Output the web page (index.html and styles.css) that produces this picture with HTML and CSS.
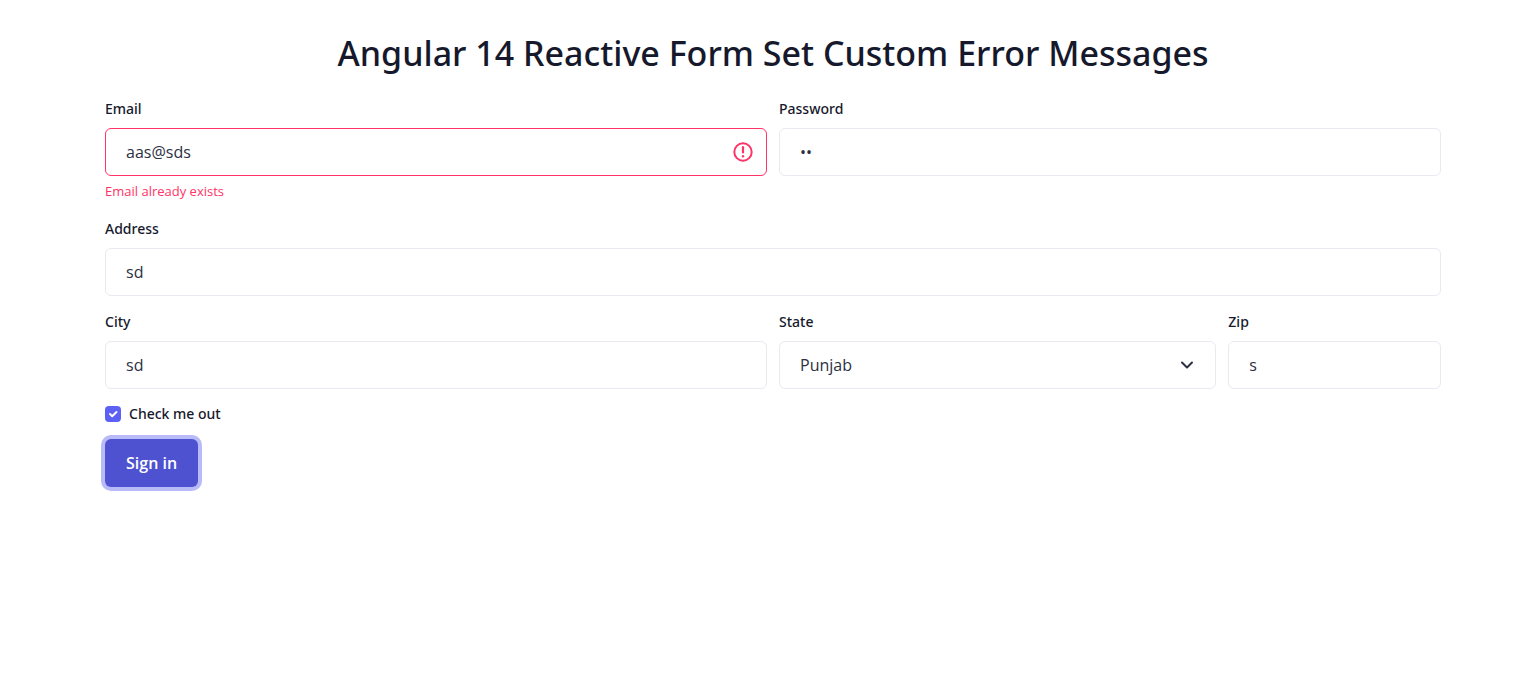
FILE: index.html
```
<!DOCTYPE html>
<html lang="en">
<head>
<meta charset="UTF-8">
<meta name="viewport" content="width=device-width, initial-scale=1">
<title>Angular 14 Reactive Form Set Custom Error Messages</title>
<link rel="stylesheet" href="styles.css">
</head>
<body>
<div class="container">
    <h1>Angular 14 Reactive Form Set Custom Error Messages</h1>
    <form class="row">
        <div class="col-6">
            <label for="email" class="form-label">Email</label>
            <div class="control">
                <input type="email" class="form-control is-invalid" id="email" value="aas@sds">
                <svg class="icon-error" viewBox="0 0 20 20" fill="none" stroke="#f36" stroke-width="2" stroke-linecap="round">
                    <circle cx="10" cy="10" r="8.7"/>
                    <path d="M10 5.2v5.2" stroke-width="2.2"/>
                    <circle cx="10" cy="14.2" r="1.2" fill="#f36" stroke="none"/>
                </svg>
            </div>
            <div class="invalid-feedback">Email already exists</div>
        </div>
        <div class="col-6">
            <label for="password" class="form-label">Password</label>
            <input type="password" class="form-control" id="password" value="sd">
        </div>
        <div class="col-12">
            <label for="address" class="form-label">Address</label>
            <input type="text" class="form-control" id="address" value="sd">
        </div>
        <div class="col-6">
            <label for="city" class="form-label">City</label>
            <input type="text" class="form-control" id="city" value="sd">
        </div>
        <div class="col-4">
            <label for="state" class="form-label">State</label>
            <div class="control">
                <select id="state" class="form-control">
                    <option selected>Punjab</option>
                </select>
                <svg class="icon-arrow" viewBox="0 0 16 16" fill="none" stroke="#2d3043" stroke-width="2" stroke-linecap="round" stroke-linejoin="round">
                    <path d="M3 5.5l5 5 5-5"/>
                </svg>
            </div>
        </div>
        <div class="col-2">
            <label for="zip" class="form-label">Zip</label>
            <input type="text" class="form-control" id="zip" value="s">
        </div>
        <div class="col-12 form-check">
            <span class="check-box">
                <input type="checkbox" class="form-check-input" id="check" checked>
                <svg class="icon-check" viewBox="0 0 16 16" fill="none" stroke="#fff" stroke-width="2" stroke-linecap="round" stroke-linejoin="round">
                    <path d="M5 8l2.2 2.2L11.5 6"/>
                </svg>
            </span>
            <label for="check" class="form-check-label">Check me out</label>
        </div>
        <div class="col-12">
            <button type="button" class="btn-primary">Sign in</button>
        </div>
    </form>
</div>
</body>
</html>
```

FILE: styles.css
```
* {
    box-sizing: border-box;
}
body {
    margin: 0;
    background-color: #fff;
    color: #16192c;
    font-family: "Segoe UI", "Open Sans", "Noto Sans", sans-serif;
    font-size: 16px;
}
.container {
    padding: 28px 95px 28px 105px;
}
h1,
label {
    font-family: "Segoe UI", "Noto Sans", sans-serif;
    font-weight: 500;
}
h1 {
    margin: 0 0 21px;
    font-size: 34px;
    line-height: 50px;
    text-align: center;
}
.row {
    display: grid;
    grid-template-columns: repeat(12, minmax(0, 1fr));
    column-gap: 12px;
    row-gap: 16px;
}
.col-2 {
    grid-column: span 2;
}
.col-4 {
    grid-column: span 4;
}
.col-6 {
    grid-column: span 6;
}
.col-12 {
    grid-column: span 12;
}
.form-label {
    display: block;
    margin-bottom: 9px;
    font-size: 14px;
    line-height: 20px;
}
.control {
    position: relative;
}
.form-control {
    display: block;
    width: 100%;
    height: 48px;
    padding: 0 20px;
    border: 1px solid #e7eaf0;
    border-radius: 6px;
    background-color: #fff;
    color: #2d3043;
    font-family: inherit;
    font-size: 16px;
    appearance: none;
}
.form-control.is-invalid {
    padding-right: 48px;
    border-color: #f36;
}
.icon-error {
    position: absolute;
    top: 14px;
    right: 14px;
    width: 20px;
    height: 20px;
}
.icon-arrow {
    position: absolute;
    top: 16px;
    right: 21px;
    width: 16px;
    height: 16px;
    pointer-events: none;
}
.invalid-feedback {
    margin: 5px 0 2px;
    color: #f36;
    font-size: 13px;
    line-height: 20px;
}
.form-check {
    display: flex;
    align-items: center;
    gap: 8px;
}
.check-box {
    position: relative;
    width: 16px;
    height: 16px;
}
.form-check-input {
    display: block;
    width: 16px;
    height: 16px;
    margin: 0;
    border-radius: 4px;
    background-color: #5c60f5;
    appearance: none;
}
.icon-check {
    position: absolute;
    top: 0;
    left: 0;
    width: 16px;
    height: 16px;
    pointer-events: none;
}
.form-check-label {
    font-size: 14px;
    line-height: 18px;
}
.btn-primary {
    display: block;
    height: 48px;
    padding: 0 21px;
    border: 0;
    border-radius: 6px;
    background-color: #4e52d0;
    box-shadow: 0 0 0 4px #b9bbf8;
    color: #fff;
    font-family: inherit;
    font-size: 16px;
    font-weight: 600;
}
```
